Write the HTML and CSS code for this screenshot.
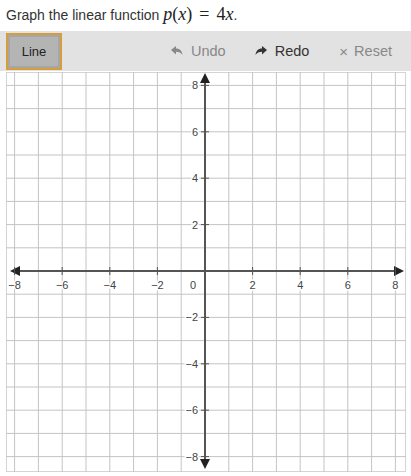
FILE: index.html
```html
<!DOCTYPE html>
<html>
<head>
<meta charset="utf-8">
<link rel="stylesheet" href="styles.css">
</head>
<body>
<div class="prompt">Graph the linear function <span class="math"><i>p</i>(<i>x</i>)<span class="eq">=</span>4<i>x</i></span>.</div>
<div class="toolbar">
  <button class="tool active">Line</button>
  <div class="actions">
    <span class="act undo"><svg width="12" height="10" viewBox="0 0 12 10"><path d="M0 4 L5 0 L5 2.5 C9 2.5 11 5 11.5 9 C10 6.5 8 5.8 5 5.8 L5 8.5 Z" fill="#888"/></svg>Undo</span>
    <span class="act redo"><svg width="12" height="10" viewBox="0 0 12 10"><path d="M12 4 L7 0 L7 2.5 C3 2.5 1 5 0.5 9 C2 6.5 4 5.8 7 5.8 L7 8.5 Z" fill="#333"/></svg>Redo</span>
    <span class="act reset"><span class="x">×</span>Reset</span>
  </div>
</div>
<div class="graph">
<svg width="400" height="400" viewBox="0 0 400 400" id="g">
</svg>
</div>
<script>
(function(){
  var ns="http://www.w3.org/2000/svg", g=document.getElementById("g");
  var ox=199, oy=199, sx=23.8, sy=23.2;
  function el(n,a){var e=document.createElementNS(ns,n);for(var k in a)e.setAttribute(k,a[k]);g.appendChild(e);return e;}
  el("rect",{x:0.5,y:0.5,width:399,height:399,fill:"#fff",stroke:"#d4d4d4"});
  for(var i=-8;i<=8;i++){
    if(i===0)continue;
    var x=ox+i*sx;
    el("line",{x1:x,y1:0,x2:x,y2:400,stroke:"#c4c4c4","stroke-width":1});
    var y=oy+i*sy;
    el("line",{x1:0,y1:y,x2:400,y2:y,stroke:"#c4c4c4","stroke-width":1});
  }
  el("line",{x1:10,y1:oy,x2:392,y2:oy,stroke:"#555","stroke-width":2});
  el("line",{x1:ox,y1:8,x2:ox,y2:390,stroke:"#555","stroke-width":2});
  el("path",{d:"M4 "+oy+" L14 "+(oy-5)+" L14 "+(oy+5)+" Z",fill:"#222"});
  el("path",{d:"M398 "+oy+" L388 "+(oy-5)+" L388 "+(oy+5)+" Z",fill:"#222"});
  el("path",{d:"M"+ox+" 1 L"+(ox-5)+" 11 L"+(ox+5)+" 11 Z",fill:"#222"});
  el("path",{d:"M"+ox+" 397 L"+(ox-5)+" 387 L"+(ox+5)+" 387 Z",fill:"#222"});
  for(var v=-8;v<=8;v+=2){
    var lab=(v<0?"\u2212":"")+Math.abs(v);
    var x2=ox+v*sx;
    if(v!==0) el("line",{x1:x2,y1:oy-4,x2:x2,y2:oy+4,stroke:"#555","stroke-width":1});
    var t=el("text",{x:(v===0?ox-12:x2),y:oy+18,"text-anchor":"middle","class":"lbl"});
    t.textContent=lab;
    if(v!==0){
      var y2=oy-v*sy;
      el("line",{x1:ox-4,y1:y2,x2:ox+4,y2:y2,stroke:"#555","stroke-width":1});
      var t2=el("text",{x:ox-7,y:y2+4,"text-anchor":"end","class":"lbl"});
      t2.textContent=(v>0?"":"\u2212")+Math.abs(v);
    }
  }
})();
</script>
</body>
</html>
```
FILE: styles.css
```css
html, body {
  margin: 0;
  padding: 0;
  background: #fff;
}
body {
  font-family: "Liberation Sans", Arial, sans-serif;
  color: #333;
  width: 411px;
}
.prompt {
  font-size: 14px;
  padding: 4px 0 0 6px;
  height: 26px;
  box-sizing: border-box;
  color: #333;
  white-space: nowrap;
}
.math {
  font-family: "Liberation Serif", "DejaVu Serif", serif;
  font-size: 18px;
  color: #222;
}
.eq {
  margin: 0 7px;
}
.toolbar {
  display: flex;
  align-items: center;
  height: 40px;
  margin-top: 5px;
  background: #e2e2e2;
  padding: 0 0 0 6px;
}
.tool {
  width: 56px;
  height: 37px;
  box-sizing: border-box;
  border: 2px solid #d79d3c;
  background: #b4b4b4;
  box-shadow: inset 0 0 0 2px #a6a6a6;
  font-family: "Liberation Sans", Arial, sans-serif;
  font-size: 13px;
  color: #222;
  padding: 0;
  margin: 0;
}
.actions {
  flex: 1;
  display: flex;
  justify-content: flex-end;
  padding-right: 19px;
}
.act {
  display: flex;
  align-items: center;
  gap: 8px;
  font-size: 14.5px;
  color: #888;
}
.act svg { display: block; }
.undo { margin-right: 29px; }
.redo { color: #333; margin-right: 30px; }
.reset { gap: 6px; }
.reset .x { font-size: 15px; }
.graph {
  padding: 1px 0 0 6px;
  line-height: 0;
}
.lbl {
  font-family: "Liberation Sans", Arial, sans-serif;
  font-size: 11px;
  fill: #444;
  paint-order: stroke;
  stroke: #fff;
  stroke-width: 3px;
}
```
